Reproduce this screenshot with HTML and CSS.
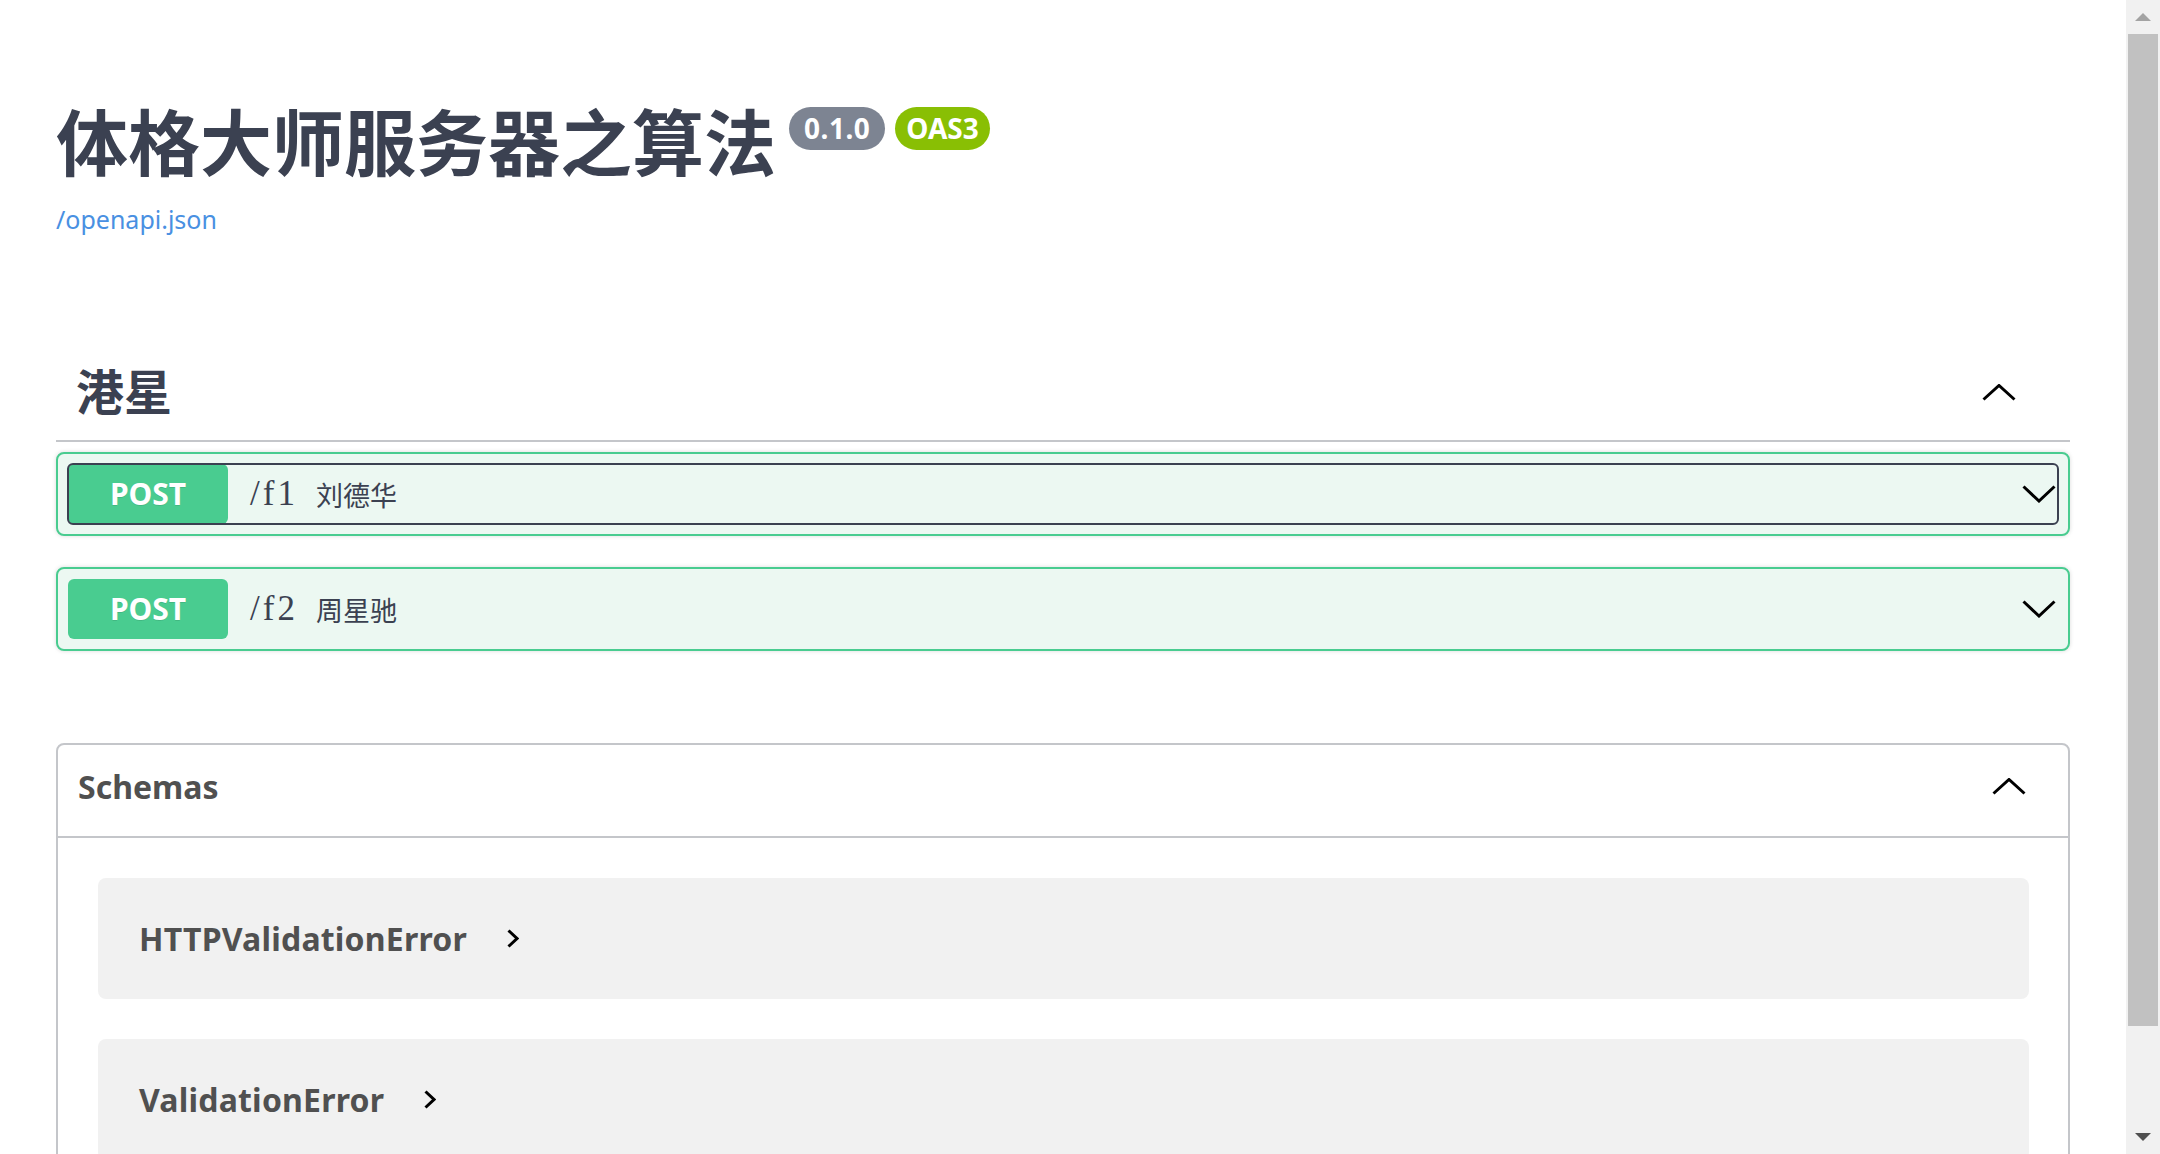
FILE: index.html
```html
<!DOCTYPE html>
<html lang="zh-CN">
<head>
  <meta charset="UTF-8">
  <meta name="viewport" content="width=device-width, initial-scale=1.0">
  <title>体格大师服务器之算法 - Swagger UI</title>
  <link rel="stylesheet" href="styles.css">
</head>
<body>
  <div class="page">
    <div class="wrapper">
      <section class="info">
        <h2 class="title">
          <span>体格大师服务器之算法</span>
          <span class="badge version">0.1.0</span>
          <span class="badge oas">OAS3</span>
        </h2>
        <a class="spec-link" href="#">/openapi.json</a>
      </section>

      <section class="tag-section">
        <h3 class="tag-head">
          <span>港星</span>
          <svg class="arrow-up" width="34" height="17" viewBox="0 0 34 17"><polyline points="1.5,15.5 17,1.5 32.5,15.5" /></svg>
        </h3>

        <div class="opblock">
          <div class="summary focused">
            <span class="method">POST</span>
            <span class="path">/f1</span>
            <span class="desc">刘德华</span>
            <svg class="arrow-down" width="34" height="18" viewBox="0 0 34 18"><polyline points="1.5,1.5 17,16 32.5,1.5" /></svg>
          </div>
        </div>

        <div class="opblock">
          <div class="summary">
            <span class="method">POST</span>
            <span class="path">/f2</span>
            <span class="desc">周星驰</span>
            <svg class="arrow-down" width="34" height="18" viewBox="0 0 34 18"><polyline points="1.5,1.5 17,16 32.5,1.5" /></svg>
          </div>
        </div>
      </section>

      <section class="models">
        <h4 class="models-head">
          <span>Schemas</span>
          <svg class="arrow-up" width="34" height="17" viewBox="0 0 34 17"><polyline points="1.5,15.5 17,1.5 32.5,15.5" /></svg>
        </h4>
        <div class="models-body">
          <div class="model-box">
            <span class="model-title">HTTPValidationError</span>
            <svg class="arrow-right" width="12" height="19" viewBox="0 0 12 19"><polyline points="1.5,1.5 10,9.5 1.5,17.5" /></svg>
          </div>
          <div class="model-box">
            <span class="model-title">ValidationError</span>
            <svg class="arrow-right" width="12" height="19" viewBox="0 0 12 19"><polyline points="1.5,1.5 10,9.5 1.5,17.5" /></svg>
          </div>
        </div>
      </section>
    </div>
  </div>

  <div class="scrollbar">
    <div class="sb-btn">
      <svg width="16" height="8" viewBox="0 0 16 8"><polygon points="0,8 8,0 16,8" fill="#a3a3a3" /></svg>
    </div>
    <div class="sb-track"><div class="sb-thumb"></div></div>
    <div class="sb-btn">
      <svg width="16" height="8" viewBox="0 0 16 8"><polygon points="0,0 16,0 8,8" fill="#505050" /></svg>
    </div>
  </div>
</body>
</html>
```

FILE: styles.css
```css
body {
  display: flex;
  height: 100vh;
  margin: 0;
  padding: 0;
  overflow: hidden;
  background: #fff;
  color: #3b4151;
  font-family: "Noto Sans", "Noto Sans CJK SC", sans-serif;
}

.page {
  flex: 1;
  min-width: 0;
  overflow: hidden;
}

/* window scrollbar */

.scrollbar {
  display: flex;
  flex-direction: column;
  width: 34px;
  background: #f1f1f1;
}

.sb-btn {
  display: flex;
  align-items: center;
  justify-content: center;
  height: 34px;
}

.sb-track {
  flex: 1;
  padding: 0 2px;
}

.sb-thumb {
  height: 992px;
  background: #c1c1c1;
}

.wrapper {
  padding: 0 56px 20px;
}

/* info block */

.info {
  padding-top: 106px;
}

.title {
  display: flex;
  align-items: flex-start;
  margin: 0;
  font-size: 72px;
  line-height: 72px;
  font-weight: 700;
  color: #3b4151;
}

.badge {
  display: inline-block;
  height: 43px;
  margin-top: 1px;
  padding: 0 15px;
  border-radius: 22px;
  color: #fff;
  font-size: 28px;
  line-height: 43px;
  font-weight: 700;
}

.version {
  margin-left: 13px;
  background: #7d8492;
  letter-spacing: 0.5px;
}

.oas {
  margin-left: 10px;
  padding: 0 11px;
  background: #89bf04;
}

.spec-link {
  display: inline-block;
  margin-top: 24px;
  color: #4990e2;
  font-size: 25px;
  line-height: 34px;
  text-decoration: none;
}

/* operations */

.tag-section {
  margin-top: 104px;
}

.tag-head {
  display: flex;
  align-items: center;
  justify-content: space-between;
  margin: 0 0 10px;
  padding: 22px 40px 18px 20px;
  border-bottom: 2px solid rgba(59, 65, 81, 0.3);
  font-size: 48px;
  line-height: 60px;
  font-weight: 700;
}

.arrow-up polyline,
.arrow-down polyline,
.arrow-right polyline {
  fill: none;
  stroke: #000;
  stroke-width: 3;
}

.tag-head .arrow-up {
  margin-right: 14px;
}

.opblock {
  margin-bottom: 31px;
  border: 2px solid #49cc90;
  border-radius: 8px;
  background: #ecf8f2;
  box-shadow: 0 0 4px rgba(0, 0, 0, 0.15);
}

.summary {
  display: flex;
  align-items: center;
  margin: 10px;
  border-radius: 5px;
}

.summary.focused {
  outline: 2px solid #3b4151;
  outline-offset: -1px;
}

.method {
  min-width: 160px;
  height: 60px;
  line-height: 60px;
  border-radius: 6px;
  background: #49cc90;
  color: #fff;
  text-align: center;
  font-size: 30px;
  font-weight: 700;
  text-shadow: 0 1px 0 rgba(0, 0, 0, 0.1);
}

.path {
  padding-left: 22px;
  font-family: "Liberation Serif", serif;
  font-size: 35px;
  letter-spacing: 3px;
  color: #3b4151;
}

.desc {
  padding-left: 18px;
  font-size: 27px;
  color: #3b4151;
}

.arrow-down {
  margin-left: auto;
  margin-right: 2px;
}

/* schemas */

.models {
  margin-top: 92px;
  padding-bottom: 40px;
  border: 2px solid rgba(59, 65, 81, 0.3);
  border-radius: 8px;
}

.models-head {
  display: flex;
  align-items: center;
  justify-content: space-between;
  box-sizing: border-box;
  height: 93px;
  margin: 0;
  padding: 0 40px 8px 20px;
  border-bottom: 2px solid rgba(59, 65, 81, 0.3);
  color: #505050;
  font-size: 32px;
  font-weight: 700;
}

.models-head .arrow-up {
  margin-right: 2px;
}

.models-body {
  padding-top: 40px;
}

.model-box {
  display: flex;
  align-items: center;
  height: 121px;
  margin: 0 39px 40px 40px;
  padding-left: 41px;
  border-radius: 8px;
  background: #f1f1f1;
}

.model-box:last-child {
  margin-bottom: 0;
}

.model-title {
  color: #505050;
  font-size: 32px;
  font-weight: 700;
  letter-spacing: 0.2px;
}

.arrow-right {
  margin-left: 40px;
}
```
